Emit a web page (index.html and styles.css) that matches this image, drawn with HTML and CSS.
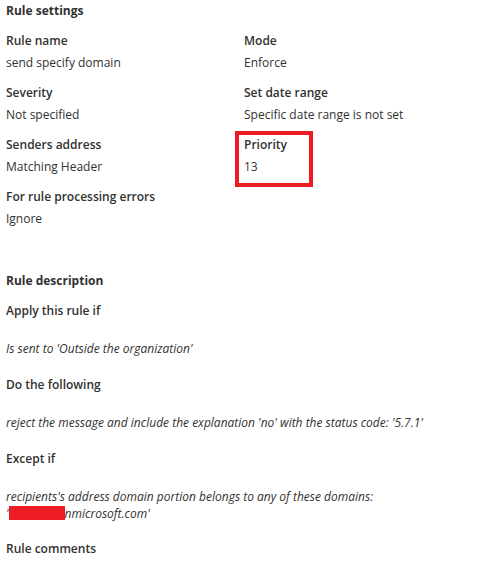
FILE: index.html
```html
<!DOCTYPE html>
<html lang="en">
<head>
<meta charset="utf-8">
<title>Rule details</title>
<link rel="stylesheet" href="styles.css">
</head>
<body>
<main class="panel">
  <h2 class="section-title">Rule settings</h2>
  <div class="settings-grid">
    <div class="field">
      <div class="field-label">Rule name</div>
      <div class="field-value">send specify domain</div>
    </div>
    <div class="field">
      <div class="field-label">Mode</div>
      <div class="field-value">Enforce</div>
    </div>
    <div class="field">
      <div class="field-label">Severity</div>
      <div class="field-value">Not specified</div>
    </div>
    <div class="field">
      <div class="field-label">Set date range</div>
      <div class="field-value">Specific date range is not set</div>
    </div>
    <div class="field">
      <div class="field-label">Senders address</div>
      <div class="field-value">Matching Header</div>
    </div>
    <div class="field field-highlight">
      <div class="field-label">Priority</div>
      <div class="field-value">13</div>
    </div>
    <div class="field">
      <div class="field-label">For rule processing errors</div>
      <div class="field-value">Ignore</div>
    </div>
  </div>

  <h2 class="section-title section-gap">Rule description</h2>
  <div class="desc">
    <div class="desc-label">Apply this rule if</div>
    <div class="desc-value">Is sent to 'Outside the organization'</div>
    <div class="desc-label">Do the following</div>
    <div class="desc-value">reject the message and include the explanation 'no' with the status code: '5.7.1'</div>
    <div class="desc-label">Except if</div>
    <div class="desc-value">recipients's address domain portion belongs to any of these domains: <span class="nowrap">'<span class="redacted"></span>nmicrosoft.com'</span></div>
    <div class="desc-label">Rule comments</div>
  </div>
</main>
</body>
</html>
```

FILE: styles.css
```css
html, body {
  margin: 0;
  padding: 0;
  background: #ffffff;
}

body {
  font-family: "Open Sans", "Liberation Sans", sans-serif;
  font-size: 12px;
  color: #323130;
}

.panel {
  padding: 1px 6px 0;
}

.section-title {
  margin: 0;
  font-size: 12px;
  font-weight: 700;
  line-height: 20px;
}

.section-gap {
  margin-top: 42px;
}

.settings-grid {
  display: grid;
  grid-template-columns: 238px 1fr;
  row-gap: 10px;
  margin-top: 10px;
}

.field {
  display: flex;
  flex-direction: column;
  gap: 2px;
}

.field-label {
  font-weight: 600;
  line-height: 20px;
}

.field-value {
  line-height: 20px;
}

.field-highlight {
  position: relative;
  justify-self: start;
}

.field-highlight::after {
  content: "";
  position: absolute;
  left: -9px;
  top: -4px;
  width: 78px;
  height: 56px;
  box-sizing: border-box;
  border: 4px solid #ed1c24;
}

.desc {
  margin-top: 10px;
}

.desc-label {
  font-weight: 600;
  line-height: 20px;
  margin-top: 17px;
}

.desc-label:first-child {
  margin-top: 0;
}

.desc-value {
  font-style: italic;
  line-height: 18px;
  margin-top: 19px;
}

.desc-value:nth-child(6) {
  line-height: 17px;
}

.nowrap {
  white-space: nowrap;
}

.redacted {
  display: inline-block;
  width: 56px;
  height: 14px;
  background: #ed1c24;
  vertical-align: -2px;
}
```
